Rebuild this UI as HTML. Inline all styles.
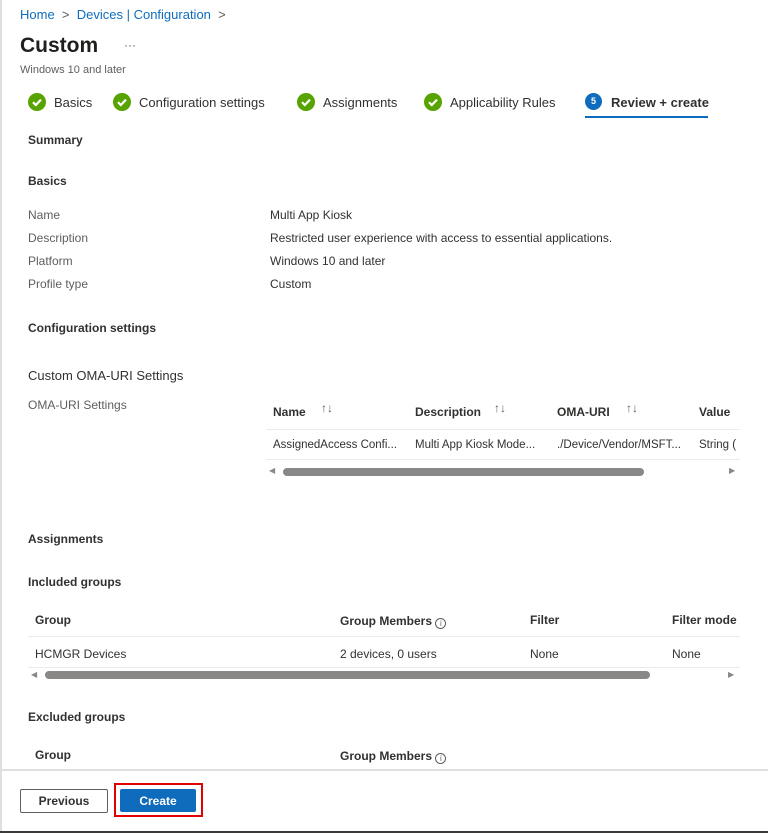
<!DOCTYPE html>
<html><head><meta charset="utf-8"><style>
*{margin:0;padding:0;box-sizing:border-box}
body{width:768px;height:833px;position:relative;background:#fff;font-family:"Liberation Sans",sans-serif;color:#323130;overflow:hidden;font-size:12px}
.a{position:absolute;white-space:nowrap}
.b{font-weight:bold;color:#323130}
.g{color:#605e5c}
.blue{color:#0f6cbd}
.chk{position:absolute;width:18px;height:18px;border-radius:50%;background:#57a300}
.chk svg{position:absolute;left:0;top:0}
.ln{position:absolute;height:1px;background:#edebe9}
.sb{position:absolute;height:8px;border-radius:4px;background:#8a8886}
.arr{position:absolute;font-size:8px;color:#8a8886}
.i{display:inline-block;width:11px;height:11px;border:1px solid #605e5c;border-radius:50%;font-size:8px;line-height:9px;text-align:center;font-weight:normal;color:#605e5c;vertical-align:-1px}
</style></head><body>
<div class="a" style="left:0;top:0;width:2px;height:833px;background:#e1dfdd"></div>
<div class="a blue" style="left:20px;top:7px;font-size:13px">Home <span style="color:#605e5c">&nbsp;&gt;&nbsp;</span> Devices | Configuration <span style="color:#605e5c">&nbsp;&gt;</span></div>
<div class="a" style="left:20px;top:34px;font-size:21px;font-weight:bold;color:#201f1e">Custom</div>
<div class="a" style="left:124px;top:38px;font-size:12px;color:#605e5c">···</div>
<div class="a g" style="left:20px;top:64px;font-size:11px">Windows 10 and later</div>

<div class="chk" style="left:28px;top:93px"><svg width="18" height="18"><path d="M5 9.2l2.8 2.8 5.2-5.4" stroke="#fff" stroke-width="2.2" fill="none"/></svg></div>
<div class="a" style="left:54px;top:95px;font-size:13px">Basics</div>
<div class="chk" style="left:113px;top:93px"><svg width="18" height="18"><path d="M5 9.2l2.8 2.8 5.2-5.4" stroke="#fff" stroke-width="2.2" fill="none"/></svg></div>
<div class="a" style="left:139px;top:95px;font-size:13px">Configuration settings</div>
<div class="chk" style="left:297px;top:93px"><svg width="18" height="18"><path d="M5 9.2l2.8 2.8 5.2-5.4" stroke="#fff" stroke-width="2.2" fill="none"/></svg></div>
<div class="a" style="left:323px;top:95px;font-size:13px">Assignments</div>
<div class="chk" style="left:424px;top:93px"><svg width="18" height="18"><path d="M5 9.2l2.8 2.8 5.2-5.4" stroke="#fff" stroke-width="2.2" fill="none"/></svg></div>
<div class="a" style="left:450px;top:95px;font-size:13px">Applicability Rules</div>
<div class="a" style="left:585px;top:93px;width:17px;height:17px;border-radius:50%;background:#0f6cbd;color:#fff;font-size:9px;font-weight:bold;text-align:center;line-height:17px">5</div>
<div class="a b" style="left:611px;top:95px;font-size:13px">Review + create</div>
<div class="a" style="left:585px;top:116px;width:123px;height:2px;background:#0f6cbd"></div>

<div class="a b" style="left:28px;top:133px">Summary</div>
<div class="a b" style="left:28px;top:174px">Basics</div>
<div class="a g" style="left:28px;top:208px">Name</div><div class="a" style="left:270px;top:208px">Multi App Kiosk</div>
<div class="a g" style="left:28px;top:231px">Description</div><div class="a" style="left:270px;top:231px">Restricted user experience with access to essential applications.</div>
<div class="a g" style="left:28px;top:254px">Platform</div><div class="a" style="left:270px;top:254px">Windows 10 and later</div>
<div class="a g" style="left:28px;top:277px">Profile type</div><div class="a" style="left:270px;top:277px">Custom</div>
<div class="a b" style="left:28px;top:321px">Configuration settings</div>
<div class="a" style="left:28px;top:368px;font-size:13px">Custom OMA-URI Settings</div>
<div class="a g" style="left:28px;top:398px">OMA-URI Settings</div>

<div class="a b" style="left:273px;top:405px">Name</div><div class="a g" style="left:321px;top:401px;font-size:12px">↑↓</div>
<div class="a b" style="left:415px;top:405px">Description</div><div class="a g" style="left:494px;top:401px;font-size:12px">↑↓</div>
<div class="a b" style="left:557px;top:405px">OMA-URI</div><div class="a g" style="left:626px;top:401px;font-size:12px">↑↓</div>
<div class="a b" style="left:699px;top:405px">Value</div>
<div class="ln" style="left:266px;top:429px;width:474px"></div>
<div class="a" style="left:273px;top:439px;font-size:11.5px">AssignedAccess Confi...</div>
<div class="a" style="left:415px;top:439px;font-size:11.5px">Multi App Kiosk Mode...</div>
<div class="a" style="left:557px;top:439px;font-size:11.5px">./Device/Vendor/MSFT...</div>
<div class="a" style="left:699px;top:439px;font-size:11.5px">String (</div>
<div class="ln" style="left:266px;top:459px;width:474px"></div>
<div class="arr" style="left:269px;top:466px">◀</div>
<div class="sb" style="left:283px;top:468px;width:361px"></div>
<div class="arr" style="left:729px;top:466px">▶</div>

<div class="a b" style="left:28px;top:532px">Assignments</div>
<div class="a b" style="left:28px;top:575px">Included groups</div>
<div class="a b" style="left:35px;top:613px">Group</div>
<div class="a b" style="left:340px;top:614px">Group Members <span class="i">i</span></div>
<div class="a b" style="left:530px;top:613px">Filter</div>
<div class="a b" style="left:672px;top:613px">Filter mode</div>
<div class="ln" style="left:28px;top:636px;width:712px"></div>
<div class="a" style="left:35px;top:647px">HCMGR Devices</div>
<div class="a" style="left:340px;top:647px">2 devices, 0 users</div>
<div class="a" style="left:530px;top:647px">None</div>
<div class="a" style="left:672px;top:647px">None</div>
<div class="ln" style="left:28px;top:667px;width:712px"></div>
<div class="arr" style="left:31px;top:670px">◀</div>
<div class="sb" style="left:45px;top:671px;width:605px"></div>
<div class="arr" style="left:728px;top:670px">▶</div>

<div class="a b" style="left:28px;top:710px">Excluded groups</div>
<div class="a b" style="left:35px;top:748px">Group</div>
<div class="a b" style="left:340px;top:749px">Group Members <span class="i">i</span></div>

<div class="a" style="left:0;top:769px;width:768px;height:2px;background:#e1dfdd"></div>
<div class="a" style="left:20px;top:789px;width:88px;height:24px;border:1px solid #605e5c;border-radius:2px;text-align:center;line-height:22px;font-weight:bold;font-size:12px">Previous</div>
<div class="a" style="left:114px;top:783px;width:89px;height:34px;border:2px solid #e00000"></div>
<div class="a" style="left:120px;top:789px;width:76px;height:23px;background:#0f6cbd;color:#fff;text-align:center;line-height:24px;font-weight:bold;font-size:12px;border-radius:2px">Create</div>
<div class="a" style="left:0;top:831px;width:768px;height:2px;background:#3b3a39"></div>
</body></html>
